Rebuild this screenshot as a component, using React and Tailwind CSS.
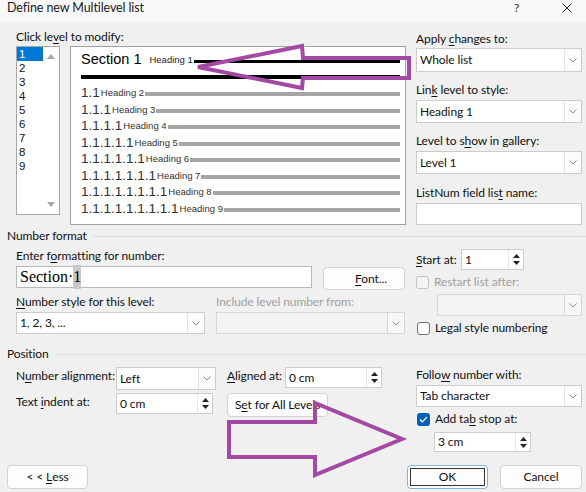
import React from 'react';

const U = ({ children }) => <span className="underline underline-offset-2">{children}</span>;

function Chevron() {
  return (
    <svg width="8" height="5" viewBox="0 0 8 5">
      <path d="M0.5 0.5 L4 4 L7.5 0.5" fill="none" stroke="#8a8a8a" strokeWidth="1" />
    </svg>
  );
}

function Select({ value, w, h = 'h-[22px]', disabled }) {
  return (
    <div className={`${w} ${h} flex border ${disabled ? 'border-[#d6d6d6] bg-[#f3f3f3]' : 'border-[#cccccc] bg-white'}`}>
      <div className="flex-1 flex items-center pl-[3px] leading-none">{value}</div>
      <div className={`w-[17px] flex items-center justify-center border-l ${disabled ? 'border-[#d6d6d6] bg-[#f7f7f7]' : 'border-[#e3e3e3] bg-[#fcfcfc]'}`}>
        <Chevron />
      </div>
    </div>
  );
}

function Spin({ value, w, h = 'h-[21px]' }) {
  return (
    <div className={`${w} ${h} flex border border-[#cccccc] bg-white`}>
      <div className="flex-1 flex items-center pl-[3px] leading-none">{value}</div>
      <div className="w-[15px] flex flex-col items-center justify-center gap-[3px] border-l border-[#e8e8e8]">
        <svg width="7" height="4" viewBox="0 0 7 4"><path d="M0 4 L3.5 0 L7 4 Z" fill="#222" /></svg>
        <svg width="7" height="4" viewBox="0 0 7 4"><path d="M0 0 L3.5 4 L7 0 Z" fill="#222" /></svg>
      </div>
    </div>
  );
}

function Check({ checked, disabled }) {
  if (checked) {
    return (
      <div className="w-[13px] h-[13px] rounded-[3px] bg-[#005fb8] flex items-center justify-center">
        <svg width="9" height="7" viewBox="0 0 9 7">
          <path d="M1 3.5 L3.4 5.8 L8 1" fill="none" stroke="white" strokeWidth="1.2" />
        </svg>
      </div>
    );
  }
  return (
    <div className={`w-[13px] h-[13px] rounded-[3px] border ${disabled ? 'border-[#c4c4c4] bg-[#f5f5f5]' : 'border-[#6f6f6f] bg-white'}`} />
  );
}

function Btn({ children, w, h = 'h-[24px]', def }) {
  if (def) {
    return (
      <div className={`${w} ${h} rounded-[4px] border border-[#7fb0e0] bg-[#fdfdfd] p-[2px]`}>
        <div className="w-full h-full border border-[#333] flex items-center justify-center">{children}</div>
      </div>
    );
  }
  return (
    <div className={`${w} ${h} rounded-[4px] border border-[#d2d2d2] bg-[#fdfdfd] flex items-center justify-center whitespace-pre`}>{children}</div>
  );
}

function Header({ title }) {
  return (
    <div className="h-[16px] flex items-center pl-[7px]">
      <span className="leading-[16px]">{title}</span>
      <div className="flex-1 ml-[6px] border-t border-[#dddddd]" />
    </div>
  );
}

const levels = [2, 3, 4, 5, 6, 7, 8, 9];

export default function App() {
  return (
    <div className="relative w-[586px] h-[492px] bg-[#f0f0f0] overflow-hidden text-[12px] tracking-[-0.1px] text-[#111] font-['Lato','Noto_Sans',sans-serif] whitespace-nowrap">
      {/* title bar */}
      <div className="h-[22px] bg-[#f8f8f8] flex items-start pl-[7px]">
        <span className="leading-[16px] text-[12.5px] text-[#1a1a1a]">Define new Multilevel list</span>
        <span className="ml-auto leading-[16px] w-[10px] text-[#333]">?</span>
        <svg className="ml-[38px] mr-[14px] mt-[3px]" width="10" height="10" viewBox="0 0 10 10">
          <path d="M0.5 0.5 L9.5 9.5 M9.5 0.5 L0.5 9.5" stroke="#222" strokeWidth="1" />
        </svg>
      </div>

      {/* top section */}
      <div className="flex pl-[16px] mt-[7px]">
        <div className="w-[390px]">
          <div className="h-[16px] leading-[16px]">Click le<U>v</U>el to modify:</div>
          <div className="flex mt-[1px] items-start">
            <div className="w-[44px] h-[169px] border border-[#a8a8a8] bg-white flex">
              <div className="w-[26px] flex flex-col">
                {[1, 2, 3, 4, 5, 6, 7, 8, 9].map((n) => (
                  <div
                    key={n}
                    className={`h-[14px] leading-[14px] pl-[2px] font-['Liberation_Sans',sans-serif] text-[11.5px] ${n === 1 ? 'bg-[#0078d7] text-white' : ''}`}
                  >
                    {n}
                  </div>
                ))}
              </div>
              <div className="flex-1 flex flex-col items-center justify-between py-[7px]">
                <svg width="8" height="5" viewBox="0 0 8 5"><path d="M0 5 L4 0 L8 5 Z" fill="#a8a8a8" /></svg>
                <svg width="8" height="5" viewBox="0 0 8 5"><path d="M0 0 L4 5 L8 0 Z" fill="#a8a8a8" /></svg>
              </div>
            </div>
            <div className="ml-[10px] w-[336px] h-[179px] border border-[#a0a0a0] bg-white pl-[10px] pr-[5px] pt-[3px] tracking-normal font-['Liberation_Sans',sans-serif]">
              <div className="flex items-center h-[20px]">
                <span className="text-[14.5px] text-black">Section 1</span>
                <span className="text-[9.5px] ml-[8px] text-[#222]">Heading 1</span>
                <div className="flex-1 h-[3px] bg-black ml-[1px] mt-[2px]" />
              </div>
              <div className="h-[4px] bg-black mt-[5px]" />
              <div className="mt-[6px]">
                {levels.map((n) => (
                  <div key={n} className="flex items-center h-[16.5px]">
                    <span className="text-[13.5px] text-[#333]">{Array(n).fill('1').join('.')}</span>
                    <span className="text-[9.5px] text-[#333] ml-[1px]">Heading {n}</span>
                    <div className="flex-1 h-[4px] bg-[#a6a6a6] ml-[1px] mt-[2px]" />
                  </div>
                ))}
              </div>
            </div>
          </div>
        </div>

        <div className="ml-[10px] w-[166px] flex flex-col">
          <div className="mt-[2px] h-[16px] leading-[16px]">Apply <U>c</U>hanges to:</div>
          <div className="mt-[1px]"><Select value="Whole list" w="w-[166px]" h="h-[24px]" /></div>
          <div className="mt-[10px] h-[16px] leading-[16px]">Lin<U>k</U> level to style:</div>
          <div className="mt-[2px]"><Select value="Heading 1" w="w-[166px]" h="h-[23px]" /></div>
          <div className="mt-[10px] h-[16px] leading-[16px]">Level to s<U>h</U>ow in gallery:</div>
          <div className="mt-[2px]"><Select value="Level 1" w="w-[166px]" h="h-[23px]" /></div>
          <div className="mt-[11px] h-[16px] leading-[16px]">ListNum field lis<U>t</U> name:</div>
          <div className="mt-[2px] w-[166px] h-[22px] border border-[#cccccc] bg-white" />
        </div>
      </div>

      {/* number format */}
      <div className="mt-[3px]"><Header title="Number format" /></div>
      <div className="flex pl-[16px]">
        <div className="w-[389px]">
          <div className="mt-[4px] h-[16px] leading-[16px]">Enter f<U>o</U>rmatting for number:</div>
          <div className="mt-[2px] flex items-start">
            <div className="w-[296px] h-[22px] border border-[#b8b8b8] bg-white flex items-center pl-[3px] tracking-normal font-['Liberation_Serif',serif] text-[16px] text-black">
              Section·<span className="bg-[#c8c8c8]">1</span>
            </div>
            <div className="ml-[11px] mt-[1px]"><Btn w="w-[82px]" h="h-[23px]"><span className="ml-[14px]"><U>F</U>ont...</span></Btn></div>
          </div>
          <div className="mt-[4px] flex h-[16px] leading-[16px]">
            <span className="w-[200px]"><U>N</U>umber style for this level:</span>
            <span className="text-[#a0a0a0]">Include level number from:</span>
          </div>
          <div className="mt-[2px] flex gap-[11px]">
            <Select value="1, 2, 3, ..." w="w-[189px]" />
            <Select value="" w="w-[189px]" disabled />
          </div>
        </div>
        <div className="ml-[11px] w-[166px] flex flex-col">
          <div className="mt-[5px] flex items-center">
            <span className="w-[45px]"><U>S</U>tart at:</span>
            <Spin value="1" w="w-[63px]" />
          </div>
          <div className="mt-[4px] h-[16px] flex items-center">
            <Check disabled />
            <span className="ml-[5px] text-[#a0a0a0]">Restart list after:</span>
          </div>
          <div className="mt-[4px] ml-[21px]"><Select value="" w="w-[145px]" disabled /></div>
          <div className="mt-[4px] h-[16px] flex items-center pl-[1px]">
            <Check />
            <span className="ml-[5px]">Legal style numbering</span>
          </div>
        </div>
      </div>

      {/* position */}
      <div className="mt-[10px]"><Header title="Position" /></div>
      <div className="flex pl-[16px]">
        <div className="w-[389px]">
          <div className="mt-[5px] flex items-start">
            <span className="w-[100px] mt-[1px] leading-[16px]">N<U>u</U>mber alignment:</span>
            <Select value="Left" w="w-[100px]" h="h-[23px]" />
            <span className="ml-[11px] w-[58px] mt-[1px] leading-[16px]"><U>A</U>ligned at:</span>
            <Spin value="0 cm" w="w-[97px]" />
          </div>
          <div className="mt-[3px] flex items-start">
            <span className="w-[100px] mt-[1px] leading-[16px]">Text <U>i</U>ndent at:</span>
            <Spin value="0 cm" w="w-[97px]" />
            <div className="ml-[14px]"><Btn w="w-[101px]">S<U>e</U>t for All Levels</Btn></div>
          </div>
        </div>
        <div className="ml-[11px] w-[166px] flex flex-col">
          <div className="mt-[5px] h-[16px] leading-[16px]">Follo<U>w</U> number with:</div>
          <div className="mt-[2px]"><Select value="Tab character" w="w-[166px]" /></div>
          <div className="mt-[4px] h-[16px] flex items-center pl-[1px]">
            <Check checked />
            <span className="ml-[5px]">Add ta<U>b</U> stop at:</span>
          </div>
          <div className="mt-[5px] ml-[18px]"><Spin value="3 cm" w="w-[97px]" h="h-[20px]" /></div>
        </div>
      </div>

      {/* buttons */}
      <div className="mt-[13px] flex pl-[7px] pr-[4px]">
        <Btn w="w-[81px]">{'< < '}<U>L</U>ess</Btn>
        <div className="ml-auto"><Btn w="w-[81px]" def>OK</Btn></div>
        <div className="ml-[12px]"><Btn w="w-[82px]">Cancel</Btn></div>
      </div>

      {/* annotation arrows */}
      <svg className="absolute inset-0 pointer-events-none" width="586" height="492" viewBox="0 0 586 492">
        <polygon
          points="409,58 303,58 302,46 198,67 302,88 303,78 409,78"
          fill="none"
          stroke="#a349a4"
          strokeWidth="4"
          strokeLinejoin="miter"
        />
        <polygon
          points="229,422 315,422 315,403 402,439 315,475 315,457 229,457"
          fill="none"
          stroke="#a349a4"
          strokeWidth="4"
          strokeLinejoin="miter"
        />
      </svg>
    </div>
  );
}
